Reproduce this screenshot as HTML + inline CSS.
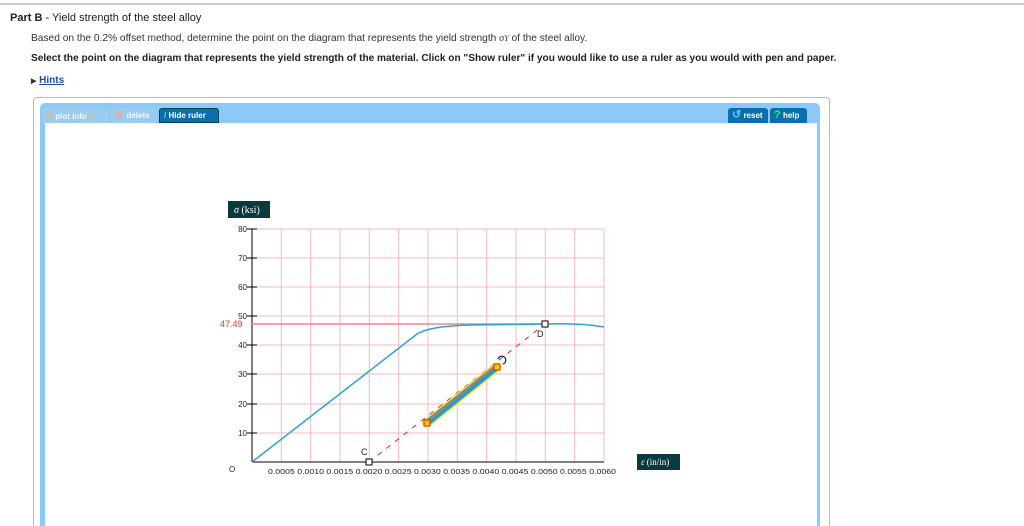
<!DOCTYPE html>
<html><head><style>
html,body{margin:0;width:1024px;height:526px;background:#fff;font-family:"Liberation Sans",Arial,sans-serif;position:relative;overflow:hidden}
.a{position:absolute;white-space:nowrap}
.tb{position:absolute;top:108px;height:15px;font-size:8px;font-weight:bold;line-height:14px;border-radius:3px 3px 0 0;padding:0 0 0 4px;box-sizing:border-box}
</style></head><body>
<div class="a" style="left:0;top:3px;width:1024px;height:2px;background:#ccc"></div>
<div class="a" style="left:10px;top:12px;font-size:11px;color:#222"><b>Part B</b> - Yield strength of the steel alloy</div>
<div class="a" style="left:31px;top:33px;font-size:10.2px;color:#333">Based on the 0.2% offset method, determine the point on the diagram that represents the yield strength <i style="font-family:'Liberation Serif',serif">σ<span style="font-size:8px">Y</span></i> of the steel alloy.</div>
<div class="a" style="left:31px;top:53px;font-size:10.1px;font-weight:bold;color:#222">Select the point on the diagram that represents the yield strength of the material. Click on "Show ruler" if you would like to use a ruler as you would with pen and paper.</div>
<div class="a" style="left:31px;top:75px;font-size:10px;font-weight:bold;color:#1a4f9c"><span style="font-size:7px;color:#333">▶</span> <u>Hints</u></div>
<div class="a" style="left:33px;top:97px;width:797px;height:429px;border:1px solid #bbb;border-bottom:none;border-radius:4px 4px 0 0;box-sizing:border-box"></div>
<div class="a" style="left:40px;top:103px;width:780px;height:423px;background:#8cc8f8;border-radius:5px 5px 0 0"></div>
<div class="a" style="left:45px;top:123px;width:772px;height:403px;background:#fff"></div>
<div class="tb" style="left:42px;width:67px;background:#9ccbf0;color:#f8f8f8"><span style="color:#f4b860;font-size:12px">+</span> plot info <span style="color:#f4b860">▾</span></div>
<div class="tb" style="left:111px;width:46px;background:#9ccbf0;color:#f8f8f8"><span style="color:#f4a090;font-size:11px">✕</span> delete</div>
<div class="tb" style="left:159px;width:60px;background:#0b6fae;color:#fff;border:1px solid #045"><span style="color:#4ee">/</span> Hide ruler</div>
<div class="tb" style="left:728px;width:40px;background:#0b6fae;color:#fff"><span style="color:#6cf;font-size:11px">↺</span> reset</div>
<div class="tb" style="left:770px;width:37px;background:#0b6fae;color:#fff"><span style="color:#3f3;font-size:11px">?</span> help</div>
<svg class="a" style="left:0;top:0" width="1024" height="526" font-family="Liberation Sans,sans-serif">
<g stroke="#f6b8bf" stroke-width="1">
<line x1="281.3" y1="229" x2="281.3" y2="462"/><line x1="310.7" y1="229" x2="310.7" y2="462"/><line x1="340" y1="229" x2="340" y2="462"/><line x1="369.3" y1="229" x2="369.3" y2="462"/><line x1="398.7" y1="229" x2="398.7" y2="462"/><line x1="428" y1="229" x2="428" y2="462"/><line x1="457.3" y1="229" x2="457.3" y2="462"/><line x1="486.7" y1="229" x2="486.7" y2="462"/><line x1="516" y1="229" x2="516" y2="462"/><line x1="545.3" y1="229" x2="545.3" y2="462"/><line x1="574.7" y1="229" x2="574.7" y2="462"/><line x1="604" y1="229" x2="604" y2="462"/>
<line x1="252" y1="229" x2="604" y2="229"/><line x1="252" y1="258" x2="604" y2="258"/><line x1="252" y1="287" x2="604" y2="287"/><line x1="252" y1="316" x2="604" y2="316"/><line x1="252" y1="345" x2="604" y2="345"/><line x1="252" y1="374" x2="604" y2="374"/><line x1="252" y1="404" x2="604" y2="404"/><line x1="252" y1="433" x2="604" y2="433"/>
</g>
<g stroke="#000" stroke-width="1">
<line x1="252" y1="229" x2="252" y2="462"/><line x1="252" y1="462" x2="604" y2="462"/>
<line x1="247" y1="229" x2="257" y2="229"/><line x1="247" y1="258" x2="257" y2="258"/><line x1="247" y1="287" x2="257" y2="287"/><line x1="247" y1="316" x2="257" y2="316"/><line x1="247" y1="345" x2="257" y2="345"/><line x1="247" y1="374" x2="257" y2="374"/><line x1="247" y1="404" x2="257" y2="404"/><line x1="247" y1="433" x2="257" y2="433"/>
</g>
<g font-size="8" fill="#222" text-anchor="end">
<text x="247" y="232">80</text><text x="247" y="261">70</text><text x="247" y="290">60</text><text x="247" y="319">50</text><text x="247" y="348">40</text><text x="247" y="377">30</text><text x="247" y="407">20</text><text x="247" y="436">10</text>
</g>
<text x="229" y="472" font-size="8" fill="#222">O</text>
<text x="268" y="474" font-size="7.5" fill="#222" textLength="348" lengthAdjust="spacingAndGlyphs">0.0005 0.0010 0.0015 0.0020 0.0025 0.0030 0.0035 0.0040 0.0045 0.0050 0.0055 0.0060</text>
<line x1="252" y1="324" x2="545" y2="324" stroke="#e88" stroke-width="1.5"/>
<text x="220" y="327" font-size="9" fill="#e33">47.49</text>
<path d="M252,462 L417,334 Q430,326 470,325 L545,324 Q580,323 604,327" fill="none" stroke="#2aa3d8" stroke-width="1.5"/>
<line x1="369" y1="462" x2="545" y2="324" stroke="#e22" stroke-dasharray="5,6"/>
<rect x="366" y="459" width="6" height="6" fill="#fff" stroke="#000"/>
<rect x="542" y="321" width="6" height="6" fill="#fff" stroke="#000"/>
<text x="361" y="455" font-size="9" fill="#222">C</text>
<text x="537" y="337" font-size="9" fill="#222">D</text>
<line x1="427" y1="423" x2="497" y2="367" stroke="#f0e040" stroke-width="9" stroke-linecap="round"/>
<line x1="427" y1="423" x2="497" y2="367" stroke="#2a9acc" stroke-width="6"/>
<line x1="430" y1="419" x2="495" y2="366" stroke="#e07830" stroke-width="2" opacity=".7"/>
<rect x="424" y="420" width="6" height="6" fill="#fc0" stroke="#c30"/>
<rect x="494" y="364" width="6" height="6" fill="#fc0" stroke="#c30"/>
<path d="M503,364 a4,4 0 1 0 -5,-5" fill="none" stroke="#000"/>
<rect x="228" y="201" width="42" height="17" fill="#0a3a40"/>
<text x="234" y="213" font-size="10" fill="#fff" font-family="Liberation Serif,serif"><tspan font-style="italic">σ</tspan> (ksi)</text>
<rect x="637" y="454" width="43" height="16" fill="#0a3a40"/>
<text x="641" y="465" font-size="9" fill="#fff" font-family="Liberation Serif,serif"><tspan font-style="italic">ε</tspan> (in/in)</text>
</svg>
</body></html>
